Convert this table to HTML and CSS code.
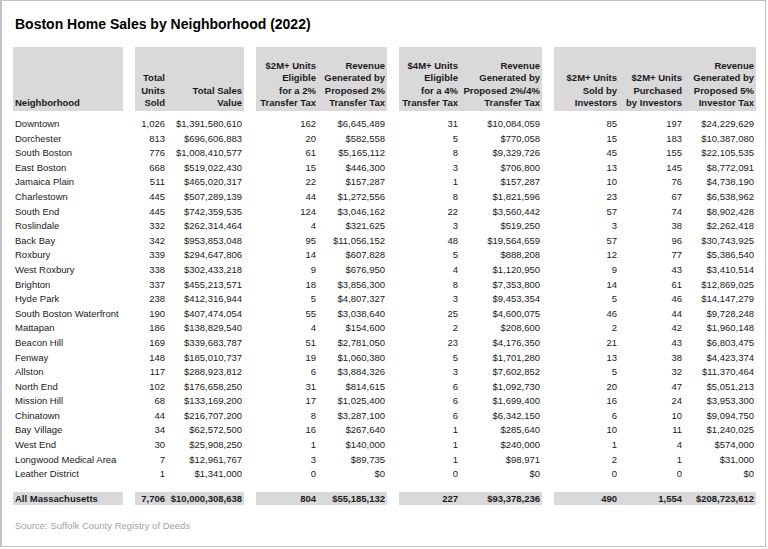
FILE: index.html
```html
<!DOCTYPE html>
<html lang="en">
<head>
    <meta charset="UTF-8">
    <meta name="viewport" content="width=device-width, initial-scale=1.0">
    <title>Boston Home Sales by Neighborhood (2022)</title>
    <link rel="stylesheet" href="styles.css">
</head>
<body>
    <div class="frame">
        <h1>Boston Home Sales by Neighborhood (2022)</h1>

        <table class="sales">
            <colgroup>
                <col class="c-name">
                <col class="c-sp">
                <col class="c-units">
                <col class="c-value">
                <col class="c-sp">
                <col class="c-elig2">
                <col class="c-rev2">
                <col class="c-sp">
                <col class="c-elig4">
                <col class="c-rev4">
                <col class="c-sp">
                <col class="c-sold">
                <col class="c-bought">
                <col class="c-rev5">
            </colgroup>
            <thead>
                <tr>
                    <th class="name">Neighborhood</th>
                    <th class="sp"></th>
                    <th>Total<br>Units<br>Sold</th>
                    <th>Total Sales<br>Value</th>
                    <th class="sp"></th>
                    <th>$2M+ Units<br>Eligible<br>for a 2%<br>Transfer Tax</th>
                    <th>Revenue<br>Generated by<br>Proposed 2%<br>Transfer Tax</th>
                    <th class="sp"></th>
                    <th>$4M+ Units<br>Eligible<br>for a 4%<br>Transfer Tax</th>
                    <th>Revenue<br>Generated by<br>Proposed 2%/4%<br>Transfer Tax</th>
                    <th class="sp"></th>
                    <th>$2M+ Units<br>Sold by<br>Investors</th>
                    <th>$2M+ Units<br>Purchased<br>by Investors</th>
                    <th>Revenue<br>Generated by<br>Proposed 5%<br>Investor Tax</th>
                </tr>
            </thead>
            <tbody>
                <tr class="first"><td class="name">Downtown</td><td class="sp"></td><td>1,026</td><td>$1,391,580,610</td><td class="sp"></td><td>162</td><td>$6,645,489</td><td class="sp"></td><td>31</td><td>$10,084,059</td><td class="sp"></td><td>85</td><td>197</td><td>$24,229,629</td></tr>
                <tr><td class="name">Dorchester</td><td class="sp"></td><td>813</td><td>$696,606,883</td><td class="sp"></td><td>20</td><td>$582,558</td><td class="sp"></td><td>5</td><td>$770,058</td><td class="sp"></td><td>15</td><td>183</td><td>$10,387,080</td></tr>
                <tr><td class="name">South Boston</td><td class="sp"></td><td>776</td><td>$1,008,410,577</td><td class="sp"></td><td>61</td><td>$5,165,112</td><td class="sp"></td><td>8</td><td>$9,329,726</td><td class="sp"></td><td>45</td><td>155</td><td>$22,105,535</td></tr>
                <tr><td class="name">East Boston</td><td class="sp"></td><td>668</td><td>$519,022,430</td><td class="sp"></td><td>15</td><td>$446,300</td><td class="sp"></td><td>3</td><td>$706,800</td><td class="sp"></td><td>13</td><td>145</td><td>$8,772,091</td></tr>
                <tr><td class="name">Jamaica Plain</td><td class="sp"></td><td>511</td><td>$465,020,317</td><td class="sp"></td><td>22</td><td>$157,287</td><td class="sp"></td><td>1</td><td>$157,287</td><td class="sp"></td><td>10</td><td>76</td><td>$4,738,190</td></tr>
                <tr><td class="name">Charlestown</td><td class="sp"></td><td>445</td><td>$507,289,139</td><td class="sp"></td><td>44</td><td>$1,272,556</td><td class="sp"></td><td>8</td><td>$1,821,596</td><td class="sp"></td><td>23</td><td>67</td><td>$6,538,962</td></tr>
                <tr><td class="name">South End</td><td class="sp"></td><td>445</td><td>$742,359,535</td><td class="sp"></td><td>124</td><td>$3,046,162</td><td class="sp"></td><td>22</td><td>$3,560,442</td><td class="sp"></td><td>57</td><td>74</td><td>$8,902,428</td></tr>
                <tr><td class="name">Roslindale</td><td class="sp"></td><td>332</td><td>$262,314,464</td><td class="sp"></td><td>4</td><td>$321,625</td><td class="sp"></td><td>3</td><td>$519,250</td><td class="sp"></td><td>3</td><td>38</td><td>$2,262,418</td></tr>
                <tr><td class="name">Back Bay</td><td class="sp"></td><td>342</td><td>$953,853,048</td><td class="sp"></td><td>95</td><td>$11,056,152</td><td class="sp"></td><td>48</td><td>$19,564,659</td><td class="sp"></td><td>57</td><td>96</td><td>$30,743,925</td></tr>
                <tr><td class="name">Roxbury</td><td class="sp"></td><td>339</td><td>$294,647,806</td><td class="sp"></td><td>14</td><td>$607,828</td><td class="sp"></td><td>5</td><td>$888,208</td><td class="sp"></td><td>12</td><td>77</td><td>$5,386,540</td></tr>
                <tr><td class="name">West Roxbury</td><td class="sp"></td><td>338</td><td>$302,433,218</td><td class="sp"></td><td>9</td><td>$676,950</td><td class="sp"></td><td>4</td><td>$1,120,950</td><td class="sp"></td><td>9</td><td>43</td><td>$3,410,514</td></tr>
                <tr><td class="name">Brighton</td><td class="sp"></td><td>337</td><td>$455,213,571</td><td class="sp"></td><td>18</td><td>$3,856,300</td><td class="sp"></td><td>8</td><td>$7,353,800</td><td class="sp"></td><td>14</td><td>61</td><td>$12,869,025</td></tr>
                <tr><td class="name">Hyde Park</td><td class="sp"></td><td>238</td><td>$412,316,944</td><td class="sp"></td><td>5</td><td>$4,807,327</td><td class="sp"></td><td>3</td><td>$9,453,354</td><td class="sp"></td><td>5</td><td>46</td><td>$14,147,279</td></tr>
                <tr><td class="name">South Boston Waterfront</td><td class="sp"></td><td>190</td><td>$407,474,054</td><td class="sp"></td><td>55</td><td>$3,038,640</td><td class="sp"></td><td>25</td><td>$4,600,075</td><td class="sp"></td><td>46</td><td>44</td><td>$9,728,248</td></tr>
                <tr><td class="name">Mattapan</td><td class="sp"></td><td>186</td><td>$138,829,540</td><td class="sp"></td><td>4</td><td>$154,600</td><td class="sp"></td><td>2</td><td>$208,600</td><td class="sp"></td><td>2</td><td>42</td><td>$1,960,148</td></tr>
                <tr><td class="name">Beacon Hill</td><td class="sp"></td><td>169</td><td>$339,683,787</td><td class="sp"></td><td>51</td><td>$2,781,050</td><td class="sp"></td><td>23</td><td>$4,176,350</td><td class="sp"></td><td>21</td><td>43</td><td>$6,803,475</td></tr>
                <tr><td class="name">Fenway</td><td class="sp"></td><td>148</td><td>$185,010,737</td><td class="sp"></td><td>19</td><td>$1,060,380</td><td class="sp"></td><td>5</td><td>$1,701,280</td><td class="sp"></td><td>13</td><td>38</td><td>$4,423,374</td></tr>
                <tr><td class="name">Allston</td><td class="sp"></td><td>117</td><td>$288,923,812</td><td class="sp"></td><td>6</td><td>$3,884,326</td><td class="sp"></td><td>3</td><td>$7,602,852</td><td class="sp"></td><td>5</td><td>32</td><td>$11,370,464</td></tr>
                <tr><td class="name">North End</td><td class="sp"></td><td>102</td><td>$176,658,250</td><td class="sp"></td><td>31</td><td>$814,615</td><td class="sp"></td><td>6</td><td>$1,092,730</td><td class="sp"></td><td>20</td><td>47</td><td>$5,051,213</td></tr>
                <tr><td class="name">Mission Hill</td><td class="sp"></td><td>68</td><td>$133,169,200</td><td class="sp"></td><td>17</td><td>$1,025,400</td><td class="sp"></td><td>6</td><td>$1,699,400</td><td class="sp"></td><td>16</td><td>24</td><td>$3,953,300</td></tr>
                <tr><td class="name">Chinatown</td><td class="sp"></td><td>44</td><td>$216,707,200</td><td class="sp"></td><td>8</td><td>$3,287,100</td><td class="sp"></td><td>6</td><td>$6,342,150</td><td class="sp"></td><td>6</td><td>10</td><td>$9,094,750</td></tr>
                <tr><td class="name">Bay Village</td><td class="sp"></td><td>34</td><td>$62,572,500</td><td class="sp"></td><td>16</td><td>$267,640</td><td class="sp"></td><td>1</td><td>$285,640</td><td class="sp"></td><td>10</td><td>11</td><td>$1,240,025</td></tr>
                <tr><td class="name">West End</td><td class="sp"></td><td>30</td><td>$25,908,250</td><td class="sp"></td><td>1</td><td>$140,000</td><td class="sp"></td><td>1</td><td>$240,000</td><td class="sp"></td><td>1</td><td>4</td><td>$574,000</td></tr>
                <tr><td class="name">Longwood Medical Area</td><td class="sp"></td><td>7</td><td>$12,961,767</td><td class="sp"></td><td>3</td><td>$89,735</td><td class="sp"></td><td>1</td><td>$98,971</td><td class="sp"></td><td>2</td><td>1</td><td>$31,000</td></tr>
                <tr><td class="name">Leather District</td><td class="sp"></td><td>1</td><td>$1,341,000</td><td class="sp"></td><td>0</td><td>$0</td><td class="sp"></td><td>0</td><td>$0</td><td class="sp"></td><td>0</td><td>0</td><td>$0</td></tr>
            </tbody>
            <tfoot>
                <tr class="spacer"><td colspan="14"></td></tr>
                <tr class="total"><td class="name">All Massachusetts</td><td class="sp"></td><td>7,706</td><td>$10,000,308,638</td><td class="sp"></td><td>804</td><td>$55,185,132</td><td class="sp"></td><td>227</td><td>$93,378,236</td><td class="sp"></td><td>490</td><td>1,554</td><td>$208,723,612</td></tr>
            </tfoot>
        </table>

        <p class="source">Source: Suffolk County Registry of Deeds</p>
    </div>
</body>
</html>
```

FILE: styles.css
```css
body {
    margin: 0;
    padding: 0;
    background-color: #ffffff;
    font-family: "Liberation Sans", Arial, sans-serif;
    color: #1a1a1a;
}
.frame {
    box-sizing: border-box;
    width: 766px;
    height: 547px;
    border: 1px solid #c3c3c3;
    border-left-width: 2px;
    padding: 15px 0 0 11px;
}
h1 {
    margin: 0 0 15px 2px;
    font-size: 14px;
    line-height: 16px;
    font-weight: bold;
    color: #000000;
}
.sales {
    table-layout: fixed;
    width: 743px;
    border-collapse: separate;
    border-spacing: 0;
    font-size: 9.5px;
}
.c-name { width: 110px; }
.c-sp { width: 12px; }
.c-units { width: 32px; }
.c-value { width: 77px; }
.c-elig2 { width: 62px; }
.c-rev2 { width: 69px; }
.c-elig4 { width: 61px; }
.c-rev4 { width: 82px; }
.c-sold { width: 65px; }
.c-bought { width: 65px; }
.c-rev5 { width: 72px; }
.sales th {
    height: 63px;
    padding: 0 2px 1px 0;
    background-color: #d9d9d9;
    vertical-align: bottom;
    text-align: right;
    font-weight: bold;
    line-height: 12.6px;
    white-space: nowrap;
}
.sales td {
    padding: 0 2px 0 0;
    line-height: 14.6px;
    text-align: right;
    white-space: nowrap;
}
.sales .name {
    padding-left: 2px;
    text-align: left;
}
.sales .sp,
.sales th.sp {
    background-color: transparent;
    padding: 0;
}
.sales tr.first td {
    padding-top: 6px;
}
.sales tr.spacer td {
    height: 10px;
    padding: 0;
    line-height: 0;
}
.sales tr.total td {
    background-color: #d9d9d9;
    font-weight: bold;
    line-height: 13px;
}
.sales tr.total td.sp {
    background-color: transparent;
}
.source {
    margin: 15px 0 0 2px;
    font-size: 9.5px;
    line-height: 12px;
    color: #a3a3a3;
}
```
